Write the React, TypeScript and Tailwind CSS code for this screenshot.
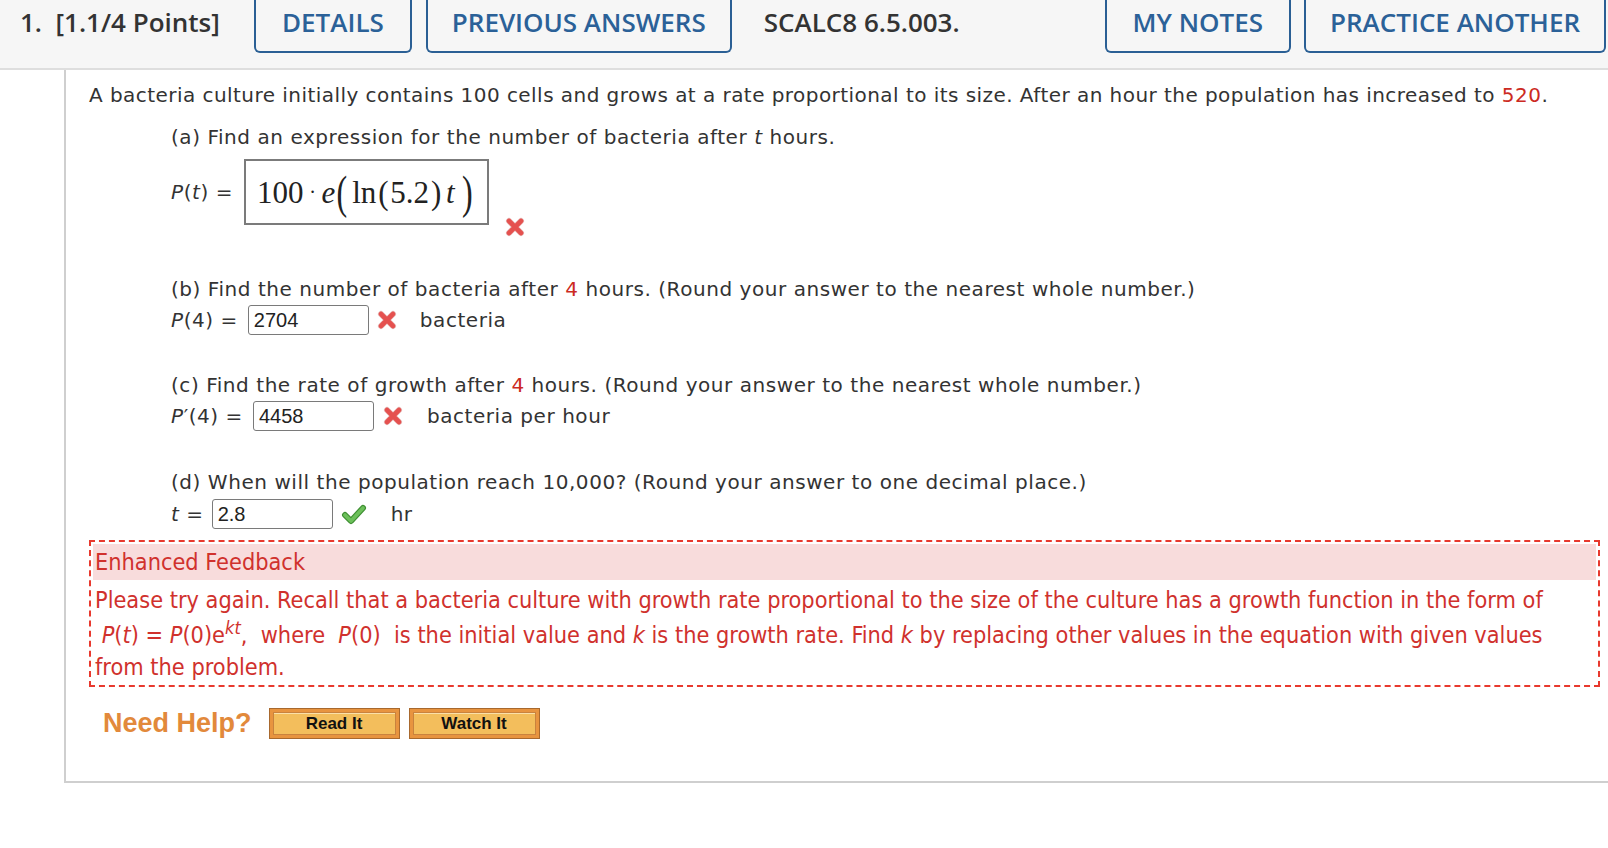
import React from 'react'

function RedX() {
  return (
    <svg width="22" height="22" viewBox="0 0 22 22" className="shrink-0">
      <path d="M5 5 L17 17 M17 5 L5 17" stroke="#b83a37" strokeWidth="6" strokeLinecap="round" opacity="0.35" />
      <path d="M5 5 L17 17 M17 5 L5 17" stroke="#e5514f" strokeWidth="4.6" strokeLinecap="round" />
    </svg>
  )
}

function GreenCheck() {
  return (
    <svg width="26" height="22" viewBox="0 0 26 22" className="shrink-0">
      <path d="M4 12 L10 18 L22 5" fill="none" stroke="#3f8f33" strokeWidth="6" strokeLinecap="round" strokeLinejoin="round" />
      <path d="M4 12 L10 18 L22 5" fill="none" stroke="#6cc05a" strokeWidth="3.6" strokeLinecap="round" strokeLinejoin="round" />
    </svg>
  )
}

function TabBox({ label, pad = 'px-[26px]' }: { label: string; pad?: string }) {
  return (
    <div className={`h-[53px] ${pad} border-x-2 border-b-2 border-[#2a5f94] rounded-b-[6px] flex items-center pb-[6px] text-[#2b6198] text-[26px] font-semibold whitespace-nowrap`}>
      {label}
    </div>
  )
}

function AnswerInput({ value }: { value: string }) {
  return (
    <div className="w-[121px] h-[30px] border border-[#7a7a7a] rounded-[3px] flex items-center pl-[5px] text-[20px] text-[#222] bg-white tracking-normal" style={{ fontFamily: '"Liberation Sans", Arial, sans-serif' }}>
      {value}
    </div>
  )
}

function HelpButton({ label }: { label: string }) {
  return (
    <div className="w-[131px] h-[31px] border border-[#a8692e] bg-[#e8943f] p-[3px]">
      <div className="w-full h-full border border-[#c9833e] bg-[#f3be5c] flex items-center justify-center text-[17px] font-bold text-[#111]" style={{ boxShadow: 'inset 0 1px 0 #fbe0a8' }}>
        {label}
      </div>
    </div>
  )
}

export default function App() {
  const sans = { fontFamily: '"Open Sans", "Noto Sans", sans-serif' }
  const verdana = { fontFamily: '"DejaVu Sans", Verdana, sans-serif' }
  const tahoma = { fontFamily: '"DejaVu Sans Condensed", Tahoma, sans-serif' }
  const red = 'text-[#cc2a22]'

  return (
    <div className="w-[1608px] h-[848px] bg-white overflow-hidden">
      {/* header */}
      <div className="h-[70px] bg-[#f6f6f6] border-b-2 border-[#dedede] flex items-start" style={sans}>
        <div className="w-[254px] pl-[20px] pt-[3px] text-[26px] font-semibold text-[#333] whitespace-nowrap">
          1.&nbsp; [1.1/4 Points]
        </div>
        <TabBox label="DETAILS" />
        <div className="w-[14px]" />
        <TabBox label="PREVIOUS ANSWERS" pad="px-[24px]" />
        <div className="pl-[32px] pt-[3px] text-[26px] font-semibold text-[#333] whitespace-nowrap">SCALC8 6.5.003.</div>
        <div className="ml-auto flex gap-[13px] pr-[2px]">
          <TabBox label="MY NOTES" />
          <TabBox label="PRACTICE ANOTHER" pad="px-[24px]" />
        </div>
      </div>

      {/* question body */}
      <div className="ml-[64px] h-[713px] border-l-2 border-b-2 border-[#cfcfcf] pl-[23px] pr-[8px] text-[#333] text-[20px] tracking-[0.45px]" style={verdana}>
        <p className="pt-[13px] leading-[24px] whitespace-nowrap">
          A bacteria culture initially contains 100 cells and grows at a rate proportional to its size. After an hour the population has increased to <span className={red}>520</span>.
        </p>

        <div className="ml-[82px] tracking-[0.55px]">
          <p className="mt-[18px] leading-[24px]">
            (a) Find an expression for the number of bacteria after <i>t</i> hours.
          </p>
          <div className="mt-[10px] flex items-start">
            <div className="flex items-center h-[66px] pr-[11px]">
              <i>P</i>(<i>t</i>) =
            </div>
            <div className="w-[245px] h-[66px] border-2 border-[#7b7b7b] flex items-center pl-[11px] text-[31px] text-[#222] whitespace-nowrap tracking-normal leading-none" style={{ fontFamily: '"Liberation Serif", "Times New Roman", serif' }}>
              <span>100</span>
              <span className="w-[18px] text-center text-[20px]">·</span>
              <i>e</i>
              <span className="inline-block w-[11px] ml-[1px] text-center scale-y-[1.45] text-[32px]">(</span>
              <span className="ml-[5px]">ln</span>
              <span className="inline-block w-[10px] ml-[2px] text-center scale-y-[1.12]">(</span>
              <span className="ml-[2px]">5.2</span>
              <span className="inline-block w-[10px] ml-[2px] text-center scale-y-[1.12]">)</span>
              <i className="ml-[5px]">t</i>
              <span className="inline-block w-[11px] ml-[7px] text-center scale-y-[1.45] text-[32px]">)</span>
            </div>
            <div className="ml-[15px] mt-[57px]">
              <RedX />
            </div>
          </div>

          <p className="mt-[39px] leading-[24px]">
            (b) Find the number of bacteria after <span className={red}>4</span> hours. (Round your answer to the nearest whole number.)
          </p>
          <div className="mt-[4px] flex items-center">
            <span className="mr-[10px]"><i>P</i>(4) =</span>
            <AnswerInput value="2704" />
            <span className="ml-[7px]"><RedX /></span>
            <span className="ml-[22px]">bacteria</span>
          </div>

          <p className="mt-[38px] leading-[24px]">
            (c) Find the rate of growth after <span className={red}>4</span> hours. (Round your answer to the nearest whole number.)
          </p>
          <div className="mt-[4px] flex items-center">
            <span className="mr-[10px]"><i>P</i>′(4) =</span>
            <AnswerInput value="4458" />
            <span className="ml-[8px]"><RedX /></span>
            <span className="ml-[23px]">bacteria per hour</span>
          </div>

          <p className="mt-[39px] leading-[24px]">
            (d) When will the population reach 10,000? (Round your answer to one decimal place.)
          </p>
          <div className="mt-[5px] flex items-center">
            <span className="mr-[8px]"><i>t</i> =</span>
            <AnswerInput value="2.8" />
            <span className="ml-[8px]"><GreenCheck /></span>
            <span className="ml-[24px]">hr</span>
          </div>
        </div>

        {/* feedback */}
        <div className="mt-[11px] border-2 border-dashed border-[#e8392e] px-[2px] pt-[2px] pb-[2px] text-[23.3px] text-[#d0312d] tracking-normal" style={tahoma}>
          <div className="bg-[#f8dcdc] h-[36px] flex items-center pl-[2px]">Enhanced Feedback</div>
          <div className="pl-[2px] mt-[4px]">
            <div className="leading-[32px] whitespace-nowrap">
              Please try again. Recall that a bacteria culture with growth rate proportional to the size of the culture has a growth function in the form of
            </div>
            <div className="leading-[32px] pt-[3px] whitespace-nowrap">
              &nbsp;<i>P</i>(<i>t</i>) = <i>P</i>(0)e<sup className="text-[18px]"><i>kt</i></sup>,&nbsp; where&nbsp; <i>P</i>(0)&nbsp; is the initial value and <i>k</i> is the growth rate. Find <i>k</i> by replacing other values in the equation with given values
            </div>
            <div className="leading-[32px]">from the problem.</div>
          </div>
        </div>

        {/* help */}
        <div className="mt-[16px] ml-[14px] flex items-center tracking-normal" style={{ fontFamily: '"Liberation Sans", Arial, sans-serif' }}>
          <span className="text-[27px] font-bold text-[#e2893b] mr-[17px]">Need Help?</span>
          <HelpButton label="Read It" />
          <div className="w-[9px]" />
          <HelpButton label="Watch It" />
        </div>
      </div>
    </div>
  )
}
